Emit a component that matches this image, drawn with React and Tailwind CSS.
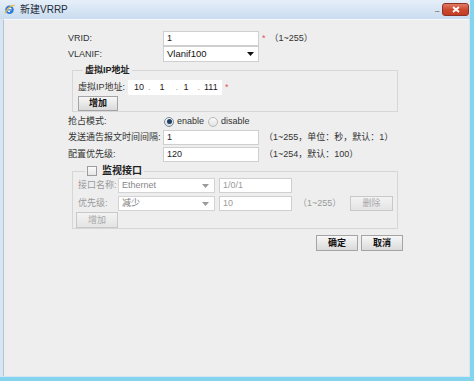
import React from 'react';

const font = { fontFamily: '"Liberation Sans", "Noto Sans CJK SC", sans-serif' };

const Arrow = ({ dim }) => (
    <svg width="7" height="4" viewBox="0 0 7 4" className="shrink-0">
        <path d="M0 0 H7 L3.5 4 Z" fill={dim ? '#9a9a9a' : '#111'} />
    </svg>
);

const TextBox = ({ value, className = '', dim }) => (
    <div
        className={`h-full bg-white border border-[#cfcfcf] flex items-center pl-[3px] ${dim ? 'text-[#9a9a9a]' : 'text-[#222]'} ${className}`}
    >
        {value}
    </div>
);

const Btn = ({ children, className = '', disabled }) => (
    <button
        className={`h-full border flex items-center justify-center ${
            disabled
                ? 'border-[#c8c8c8] bg-gradient-to-b from-[#f3f3f3] to-[#e4e4e4] text-[#a8a8a8]'
                : 'border-[#a4a4a4] bg-gradient-to-b from-[#f7f7f7] to-[#dadada] text-[#111] font-bold'
        } ${className}`}
    >
        {children}
    </button>
);

const Row = ({ label, children, className = '' }) => (
    <div className={`flex items-center h-[15px] ${className}`}>
        <div className="w-[95px] text-[#333]">{label}</div>
        {children}
    </div>
);

const Star = () => <span className="text-[#e2506c] ml-[3px] mr-[4px]">*</span>;

export default function App() {
    return (
        <div
            style={font}
            className="w-[474px] h-[381px] flex flex-col bg-[#d8e5f3] border-r-4 border-r-[#84d4ee] border-b-4 border-b-[#84d4ee] text-[9px] leading-none"
        >
            {/* title bar */}
            <div className="h-[19px] shrink-0 flex items-center bg-gradient-to-b from-[#e6eff9] to-[#cadcef] pl-[4px] pr-[1px]">
                <svg width="11" height="11" viewBox="0 0 12 12" className="shrink-0">
                    <circle cx="6" cy="6.3" r="4.6" fill="#2b7ad6" />
                    <circle cx="6" cy="6.3" r="2.6" fill="#ffffff" />
                    <rect x="3" y="5.8" width="6.2" height="1.3" fill="#2b7ad6" />
                    <rect x="6.5" y="7.3" width="3.5" height="1.6" fill="#2b7ad6" />
                    <path d="M1 10 C4 4 9 1 11.5 1.5" stroke="#f0b428" strokeWidth="1.2" fill="none" />
                </svg>
                <span className="ml-[5px] text-[#1d2a3a] text-[10px]">新建VRRP</span>
                <span className="ml-auto mr-[3px] text-[#555] tracking-[-1px]">...</span>
                <div className="w-[27px] h-[13px] rounded-[3px] border border-[#8e3324] bg-gradient-to-b from-[#e07a64] via-[#cc4a30] to-[#c23d25] flex items-center justify-center">
                    <svg width="8" height="7" viewBox="0 0 8 7">
                        <path d="M1 1 L7 6 M7 1 L1 6" stroke="#fff" strokeWidth="1.8" />
                    </svg>
                </div>
            </div>

            {/* body */}
            <div className="flex-1 ml-[3px] mr-[1px] mb-[1px] bg-[#eeeeee] border-l border-t border-l-[#b3c3d6] border-t-[#f7f9fc] pt-[11px] pl-[64px]">
                <Row label="VRID:">
                    <TextBox value="1" className="w-[96px]" />
                    <Star />
                    <span className="text-[#333]">（1~255）</span>
                </Row>
                <Row label="VLANIF:" className="h-[16px]">
                    <div className="w-[96px] h-full bg-white border border-[#cfcfcf] flex items-center pl-[3px] pr-[4px] text-[#111] text-[9.5px]">
                        Vlanif100
                        <span className="ml-auto"><Arrow /></span>
                    </div>
                </Row>

                <fieldset className="mt-[1px] ml-[4px] w-[326px] border border-[#d6d6d6] pl-[5px]">
                    <legend className="ml-[5px] px-[2px] leading-[14px] font-bold text-[#222]">虚拟IP地址</legend>
                    <div className="flex items-center h-[15px] mt-[3px]">
                        <div className="w-[50px] text-[#333]">虚拟IP地址:</div>
                        <div className="w-[94px] h-full bg-white flex items-center text-[#222]">
                            <span className="w-[20px] pl-[6px]">10</span>
                            <span className="w-[6px] text-[#999]">.</span>
                            <span className="w-[16px] text-center">1</span>
                            <span className="w-[8px] text-[#999] text-right">.</span>
                            <span className="w-[16px] text-center">1</span>
                            <span className="w-[6px] text-[#999] text-right">.</span>
                            <span className="pl-[4px]">111</span>
                        </div>
                        <Star />
                    </div>
                    <div className="h-[15px] mt-[1px]">
                        <Btn className="w-[40px]">增加</Btn>
                    </div>
                </fieldset>

                <Row label="抢占模式:" className="mt-[2px]">
                    <div className="flex items-center text-[#333] pl-[1px]">
                        <span className="w-[10px] h-[10px] rounded-full border border-[#7d8a98] bg-gradient-to-b from-[#f4f6f8] to-[#d6dde5] flex items-center justify-center">
                            <span className="w-[5px] h-[5px] rounded-full bg-[#1f3f66]" />
                        </span>
                        <span className="ml-[3px]">enable</span>
                        <span className="ml-[4px] w-[10px] h-[10px] rounded-full border border-[#b9b9b9] bg-gradient-to-b from-[#fafafa] to-[#e3e3e3]" />
                        <span className="ml-[3px]">disable</span>
                    </div>
                </Row>
                <Row label="发送通告报文时间间隔:" className="mt-[1px]">
                    <TextBox value="1" className="w-[96px]" />
                    <span className="ml-[5px] text-[#333]">（1~255，单位：秒，默认：1）</span>
                </Row>
                <Row label="配置优先级:" className="mt-[2px]">
                    <TextBox value="120" className="w-[96px]" />
                    <span className="ml-[5px] text-[#333]">（1~254，默认：100）</span>
                </Row>

                <fieldset className="mt-[2px] ml-[4px] w-[326px] border border-[#d6d6d6] pl-[5px] pr-[4px]">
                    <legend className="ml-[7px] px-[2px] leading-[14px] flex items-center font-bold text-[#222]">
                        <span className="w-[10px] h-[10px] border border-[#9c9c9c] bg-gradient-to-b from-[#fbfbfb] to-[#e6e6e6]" />
                        <span className="ml-[5px] text-[10px]">监视接口</span>
                    </legend>
                    <div className="flex items-center h-[15px] text-[#9a9a9a]">
                        <div className="w-[40px]">接口名称:</div>
                        <div className="w-[97px] h-full bg-white border border-[#d3d3d3] flex items-center pl-[3px] pr-[5px] text-[#888]">
                            Ethernet
                            <span className="ml-auto"><Arrow dim /></span>
                        </div>
                        <TextBox value="1/0/1" dim className="w-[73px] ml-[4px]" />
                    </div>
                    <div className="flex items-center h-[15px] mt-[3px] text-[#9a9a9a]">
                        <div className="w-[40px]">优先级:</div>
                        <div className="w-[97px] h-full bg-white border border-[#d3d3d3] flex items-center pl-[3px] pr-[5px] text-[#777]">
                            减少
                            <span className="ml-auto"><Arrow dim /></span>
                        </div>
                        <TextBox value="10" dim className="w-[73px] ml-[4px]" />
                        <span className="ml-[6px]">（1~255）</span>
                        <Btn disabled className="w-[43px] ml-auto">删除</Btn>
                    </div>
                    <div className="h-[16px] mt-[1px] ml-[-2px]">
                        <Btn disabled className="w-[42px]">增加</Btn>
                    </div>
                </fieldset>

                <div className="flex h-[16px] mt-[6px] ml-[248px] gap-[3px]">
                    <Btn className="w-[42px]">确定</Btn>
                    <Btn className="w-[42px]">取消</Btn>
                </div>
            </div>
        </div>
    );
}
